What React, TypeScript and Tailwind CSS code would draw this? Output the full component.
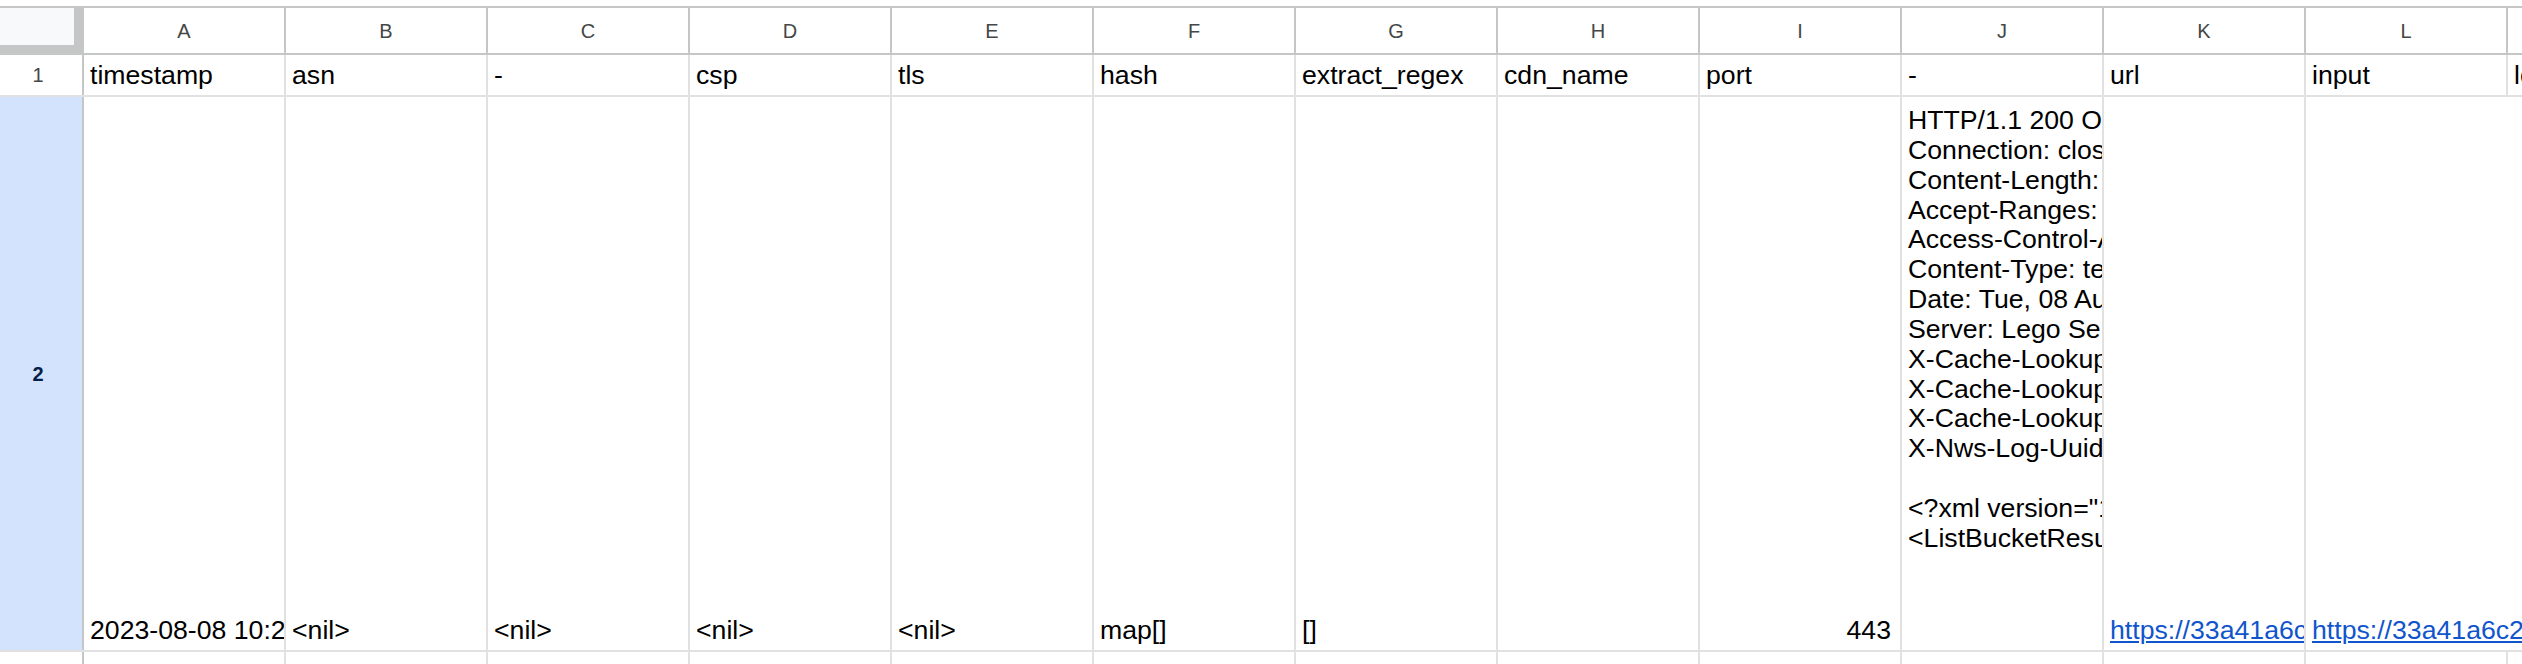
import React from "react";

const letters = ["A", "B", "C", "D", "E", "F", "G", "H", "I", "J", "K", "L", "M"];
const row1 = ["timestamp", "asn", "-", "csp", "tls", "hash", "extract_regex", "cdn_name", "port", "-", "url", "input", "location"];

const httpLines = [
  "HTTP/1.1 200 OK",
  "Connection: close",
  "Content-Length: 329",
  "Accept-Ranges: bytes",
  "Access-Control-Allow-Origin: *",
  "Content-Type: text/xml",
  "Date: Tue, 08 Aug 2023 02:29:47 GMT",
  "Server: Lego Server",
  "X-Cache-Lookup: Hit From Upstream",
  "X-Cache-Lookup: Hit From Inner Cluster",
  "X-Cache-Lookup: Cache Miss",
  "X-Nws-Log-Uuid: 1702935447598163325",
  "",
  '<?xml version="1.0" encoding="UTF-8"?>',
  '<ListBucketResult xmlns="http://s3.amazonaws.com/doc/2006-03-01/">',
];

const font = { fontFamily: '"Liberation Sans", Arial, sans-serif' };

function HeaderCell({ label, last }: { label: string; last?: boolean }) {
  return (
    <div
      className={`${last ? "w-[200px] shrink-0" : "w-[202px] shrink-0 border-r-2 border-[#c4c7c5]"} flex items-center justify-center text-[20px] text-[#444746]`}
    >
      {label}
    </div>
  );
}

export default function App() {
  return (
    <div className="w-[2522px] h-[664px] overflow-hidden bg-white text-black" style={font}>
      {/* top gap */}
      <div className="h-[6px] bg-white" />
      {/* column header row */}
      <div className="flex h-[49px] border-t-2 border-b-2 border-[#c4c7c5]">
        <div className="w-[84px] shrink-0 bg-[#c4c7c5] flex flex-col">
          <div className="w-[74px] h-[37px] bg-[#f8f9fa]" />
        </div>
        {letters.map((l, i) => (
          <HeaderCell key={l} label={l} last={i === letters.length - 1} />
        ))}
      </div>
      {/* row 1 */}
      <div className="flex h-[42px] border-b-2 border-[#e1e1e1]">
        <div className="w-[84px] shrink-0 border-r-2 border-[#c4c7c5] flex items-center justify-center pr-[6px] text-[20px] text-[#444746]">
          1
        </div>
        {row1.map((t, i) => (
          <div
            key={i}
            className={`${i === row1.length - 1 ? "w-[200px]" : "w-[202px] border-r-2 border-[#e1e1e1]"} shrink-0 overflow-hidden whitespace-nowrap flex items-end px-[6px] pb-[5px] text-[26.67px] leading-[30px]`}
          >
            {t}
          </div>
        ))}
      </div>
      {/* row 2 */}
      <div className="flex h-[555px] border-b-2 border-[#e1e1e1]">
        <div className="w-[84px] shrink-0 border-r-2 border-[#c4c7c5] bg-[#d3e3fd] flex items-center justify-center pr-[6px] text-[20px] font-bold text-[#041e49]">
          2
        </div>
        {/* A */}
        <div className="w-[202px] shrink-0 border-r-2 border-[#e1e1e1] overflow-hidden whitespace-nowrap flex items-end px-[6px] pb-[5px] text-[26.67px] leading-[30px]">
          2023-08-08 10:29:47
        </div>
        {["<nil>", "<nil>", "<nil>", "<nil>", "map[]", "[]", ""].map((t, i) => (
          <div
            key={i}
            className="w-[202px] shrink-0 border-r-2 border-[#e1e1e1] overflow-hidden whitespace-nowrap flex items-end px-[6px] pb-[5px] text-[26.67px] leading-[30px]"
          >
            {t}
          </div>
        ))}
        {/* I */}
        <div className="w-[202px] shrink-0 border-r-2 border-[#e1e1e1] overflow-hidden whitespace-nowrap flex items-end justify-end pl-[6px] pr-[9px] pb-[5px] text-[26.67px] leading-[30px]">
          443
        </div>
        {/* J */}
        <div className="w-[202px] shrink-0 border-r-2 border-[#e1e1e1] overflow-hidden whitespace-pre flex flex-col justify-start px-[6px] pt-[8px] text-[26.67px] leading-[30px]">
          {httpLines.map((l, i) => (
            <div key={i} className="h-[29.85px]">
              {l}
            </div>
          ))}
        </div>
        {/* K */}
        <div className="w-[202px] shrink-0 border-r-2 border-[#e1e1e1] overflow-hidden whitespace-nowrap flex items-end px-[6px] pb-[5px] text-[26.67px] leading-[30px]">
          <span className="text-[#1155cc] underline">https://33a41a6c2b1d-1301122405.cos.ap-guangzhou.myqcloud.com:443</span>
        </div>
        {/* L (overflows into empty M) */}
        <div className="w-[202px] shrink-0 border-r-2 border-transparent overflow-visible whitespace-nowrap flex items-end px-[6px] pb-[5px] text-[26.67px] leading-[30px]">
          <span className="text-[#1155cc] underline">https://33a41a6c2b1d-1301122405.cos.ap-guangzhou.myqcloud.com</span>
        </div>
        {/* M */}
        <div className="w-[200px] shrink-0" />
      </div>
      {/* row 3 */}
      <div className="flex h-[42px] border-b-2 border-[#e1e1e1]">
        <div className="w-[84px] shrink-0 border-r-2 border-[#c4c7c5] flex items-center justify-center pr-[6px] text-[20px] text-[#444746]">
          3
        </div>
        {letters.map((l, i) => (
          <div
            key={l}
            className={`${i === letters.length - 1 ? "w-[200px]" : "w-[202px] border-r-2 border-[#e1e1e1]"} shrink-0`}
          />
        ))}
      </div>
    </div>
  );
}
